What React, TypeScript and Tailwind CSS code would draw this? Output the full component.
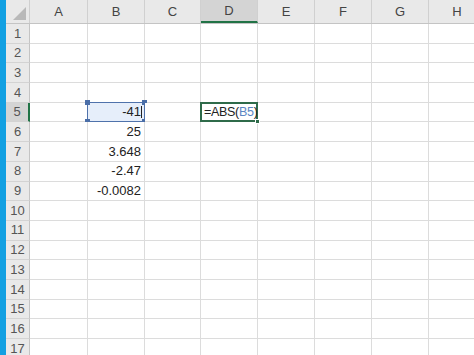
import React from "react";

const cols = ["A", "B", "C", "D", "E", "F", "G", "H"];
const widths = ["w-[58px]", "w-[57px]", "w-[56px]", "w-[57px]", "w-[57px]", "w-[57px]", "w-[57px]", "w-[57px]"];
const rows = Array.from({ length: 17 }, (_, i) => i + 1);

const values: Record<number, string> = {
  5: "-41",
  6: "25",
  7: "3.648",
  8: "-2.47",
  9: "-0.0082",
};

function Handle({ pos }: { pos: string }) {
  return <span className={`absolute h-[5px] w-[5px] bg-[#4a6ea8] ${pos}`} />;
}

function Cell({ row, col }: { row: number; col: number }) {
  const isB = col === 1;
  const isD = col === 3;
  const sel = row === 5;
  return (
    <div
      className={`relative h-full shrink-0 border-r border-b border-[#dcdcdc] ${widths[col]} ${
        isB && sel ? "bg-[#e6eefa]" : "bg-white"
      } ${isD && sel ? "z-10" : ""}`}
    >
      {isB && values[row] && (
        <span className="absolute inset-0 flex items-center justify-end pr-[3px] text-[13px] text-[#222]">
          {values[row]}
        </span>
      )}
      {isB && sel && (
        <>
          <span className="absolute -top-px -left-px -right-px -bottom-px border border-[#4f72ab]" />
          <Handle pos="-top-[3px] -left-[3px]" />
          <Handle pos="-top-[3px] -right-[3px]" />
          <Handle pos="-bottom-[3px] -left-[3px]" />
          <Handle pos="-bottom-[3px] -right-[3px]" />
          <span className="absolute right-[2px] top-[3px] bottom-[3px] w-px bg-[#222]" />
        </>
      )}
      {isD && sel && (
        <>
          <span className="absolute -top-px -left-px -right-px -bottom-px border-2 border-[#2f6b4a]" />
          <span className="absolute inset-y-0 left-0 flex items-center whitespace-nowrap pl-[3px] text-[12.5px] tracking-[-0.3px] text-[#222]">
            =ABS(<span className="text-[#5b86c3]">B5</span>)
          </span>
          <span className="absolute -bottom-[3px] -right-[3px] h-[5px] w-[5px] border border-white bg-[#2f6b4a]" />
        </>
      )}
    </div>
  );
}

export default function App() {
  return (
    <div className="flex h-[355px] w-[474px] overflow-hidden bg-white font-['Liberation_Sans',Arial,sans-serif]">
      <div className="w-[6px] shrink-0 bg-[#12a0e2]" />
      <div className="flex min-w-0 flex-1 flex-col">
        <div className="flex h-[24px] shrink-0 border-b border-[#c4c4c4] bg-[#e9e9e9]">
          <div className="relative w-[24px] shrink-0 border-r border-[#cfcfcf]">
            <span className="absolute right-[3px] bottom-[3px] h-0 w-0 border-b-[13px] border-l-[13px] border-b-[#b9b9b9] border-l-transparent" />
          </div>
          {cols.map((c, i) => (
            <div
              key={c}
              className={`flex shrink-0 items-center justify-center border-r border-[#d0d0d0] text-[13px] text-[#444] ${widths[i]} ${
                c === "D" ? "border-b-2 border-b-[#217346] bg-[#d4d4d4]" : ""
              }`}
            >
              {c}
            </div>
          ))}
        </div>
        {rows.map((r) => (
          <div key={r} className="flex h-[19.7px] shrink-0">
            <div
              className={`flex w-[24px] shrink-0 items-center justify-center border-b border-[#d3d3d3] text-[13px] text-[#555] ${
                r === 5 ? "border-r-2 border-r-[#217346] bg-[#d4d4d4]" : "border-r border-r-[#c4c4c4] bg-[#e9e9e9]"
              }`}
            >
              {r}
            </div>
            {cols.map((c, i) => (
              <Cell key={c} row={r} col={i} />
            ))}
          </div>
        ))}
      </div>
    </div>
  );
}
